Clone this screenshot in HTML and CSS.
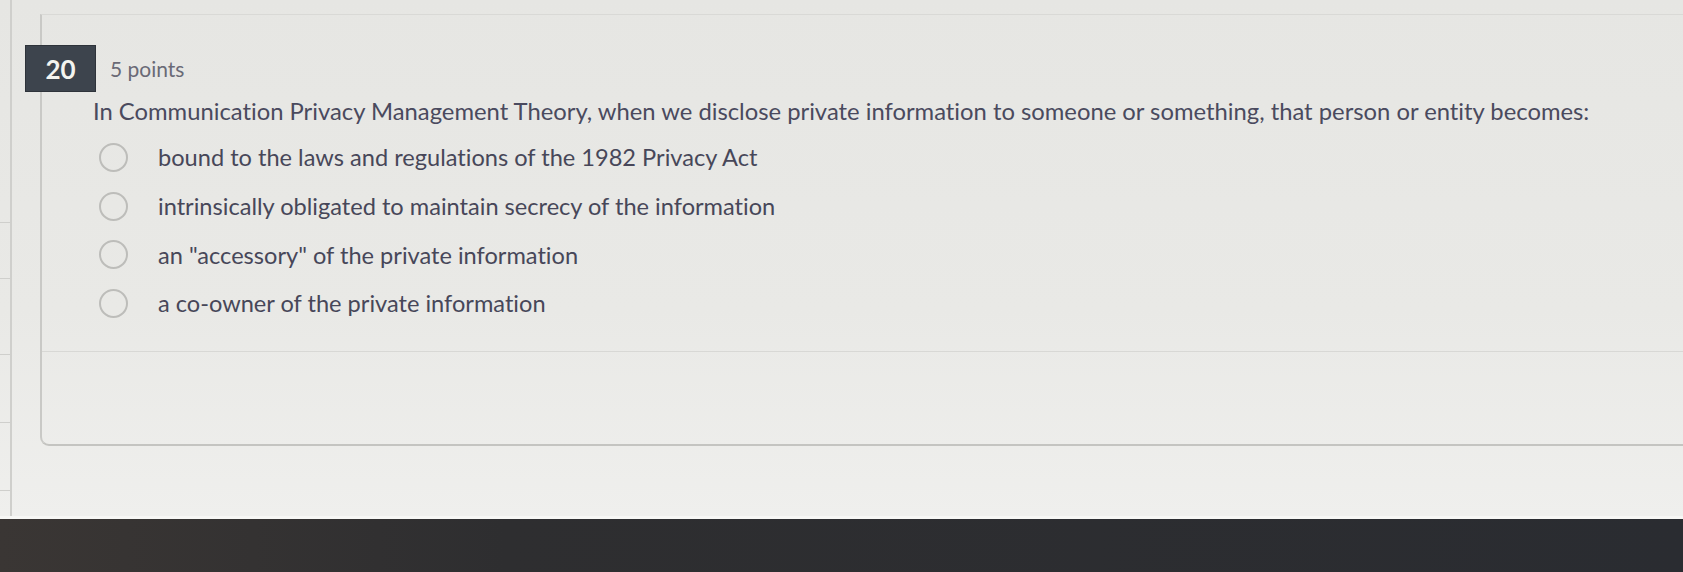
FILE: index.html
```html
<!DOCTYPE html>
<html>
<head>
<meta charset="utf-8">
<link rel="stylesheet" href="styles.css">
</head>
<body>
<div class="page">
  <div class="main">
    <aside class="sidebar">
      <div class="side-item s1"></div>
      <div class="side-item s2"></div>
      <div class="side-item s3"></div>
      <div class="side-item s4"></div>
      <div class="side-item s5"></div>
    </aside>
    <div class="content">
      <section class="card">
        <div class="badge">20</div>
        <div class="qbody">
          <div class="points">5 points</div>
          <div class="qtext">In Communication Privacy Management Theory, when we disclose private information to someone or something, that person or entity becomes:</div>
          <ul class="answers">
            <li class="answer"><span class="radio"></span><span class="label">bound to the laws and regulations of the 1982 Privacy Act</span></li>
            <li class="answer"><span class="radio"></span><span class="label">intrinsically obligated to maintain secrecy of the information</span></li>
            <li class="answer"><span class="radio"></span><span class="label">an "accessory" of the private information</span></li>
            <li class="answer"><span class="radio"></span><span class="label">a co-owner of the private information</span></li>
          </ul>
        </div>
        <div class="qfoot"></div>
      </section>
    </div>
  </div>
  <div class="bezel"></div>
</div>
</body>
</html>
```

FILE: styles.css
```css
html, body {
  margin: 0;
  padding: 0;
}
body {
  width: 1683px;
  height: 572px;
  overflow: hidden;
  background: #e8e8e5;
  font-family: Lato, "Open Sans", sans-serif;
  font-variant-ligatures: none;
}
.page {
  display: flex;
  flex-direction: column;
  height: 572px;
}
.main {
  display: flex;
  height: 516px;
  background: linear-gradient(180deg, #e6e6e3 0%, #e9e9e6 60%, #efefed 100%);
}
.sidebar {
  width: 12px;
  border-right: 2px solid #cfcfcc;
  display: flex;
  flex-direction: column;
  box-sizing: border-box;
}
.side-item {
  border-bottom: 1px solid #cfcfcc;
}
.s1 { height: 222px; }
.s2 { height: 55px; }
.s3 { height: 75px; }
.s4 { height: 67px; }
.s5 { height: 67px; }
.content {
  flex: 1;
  padding: 14px 0 0 28px;
}
.card {
  position: relative;
  height: 432px;
  box-sizing: border-box;
  border-top: 1px solid #d9d9d6;
  border-left: 2px solid #c9c9c6;
  border-bottom: 2px solid #c4c4c1;
  border-bottom-left-radius: 9px;
  display: flex;
  flex-direction: column;
}
.badge {
  position: absolute;
  left: -17px;
  top: 30px;
  width: 71px;
  height: 47px;
  box-sizing: border-box;
  background: #3d444d;
  border: 1px solid #2e333a;
  color: #f4f4ef;
  font-weight: 700;
  font-size: 26px;
  display: flex;
  align-items: center;
  justify-content: center;
}
.qbody {
  height: 337px;
  box-sizing: border-box;
  border-bottom: 1px solid #d8d8d5;
  padding: 30px 0 0 51px;
}
.points {
  height: 47px;
  display: flex;
  align-items: center;
  padding-left: 17px;
  color: #6a6a76;
  font-size: 21px;
}
.qtext {
  margin-top: 5px;
  color: #4a4a5e;
  font-size: 23.8px;
  line-height: 28px;
  white-space: nowrap;
}
.answers {
  list-style: none;
  margin: 8px 0 0 0;
  padding: 0;
}
.answer {
  display: flex;
  align-items: center;
  height: 48.7px;
}
.radio {
  width: 29px;
  height: 29px;
  box-sizing: border-box;
  border: 2px solid #bdbdba;
  border-radius: 50%;
  margin-left: 6px;
  margin-right: 30px;
  flex: none;
}
.label {
  color: #474759;
  font-size: 23.6px;
}
.qfoot {
  flex: 1;
}
.bezel {
  flex: 1;
  border-top: 3px solid #f7f7f5;
  background: linear-gradient(90deg, #3a3634 0%, #2e2e30 30%, #2a2c31 100%);
}
```
